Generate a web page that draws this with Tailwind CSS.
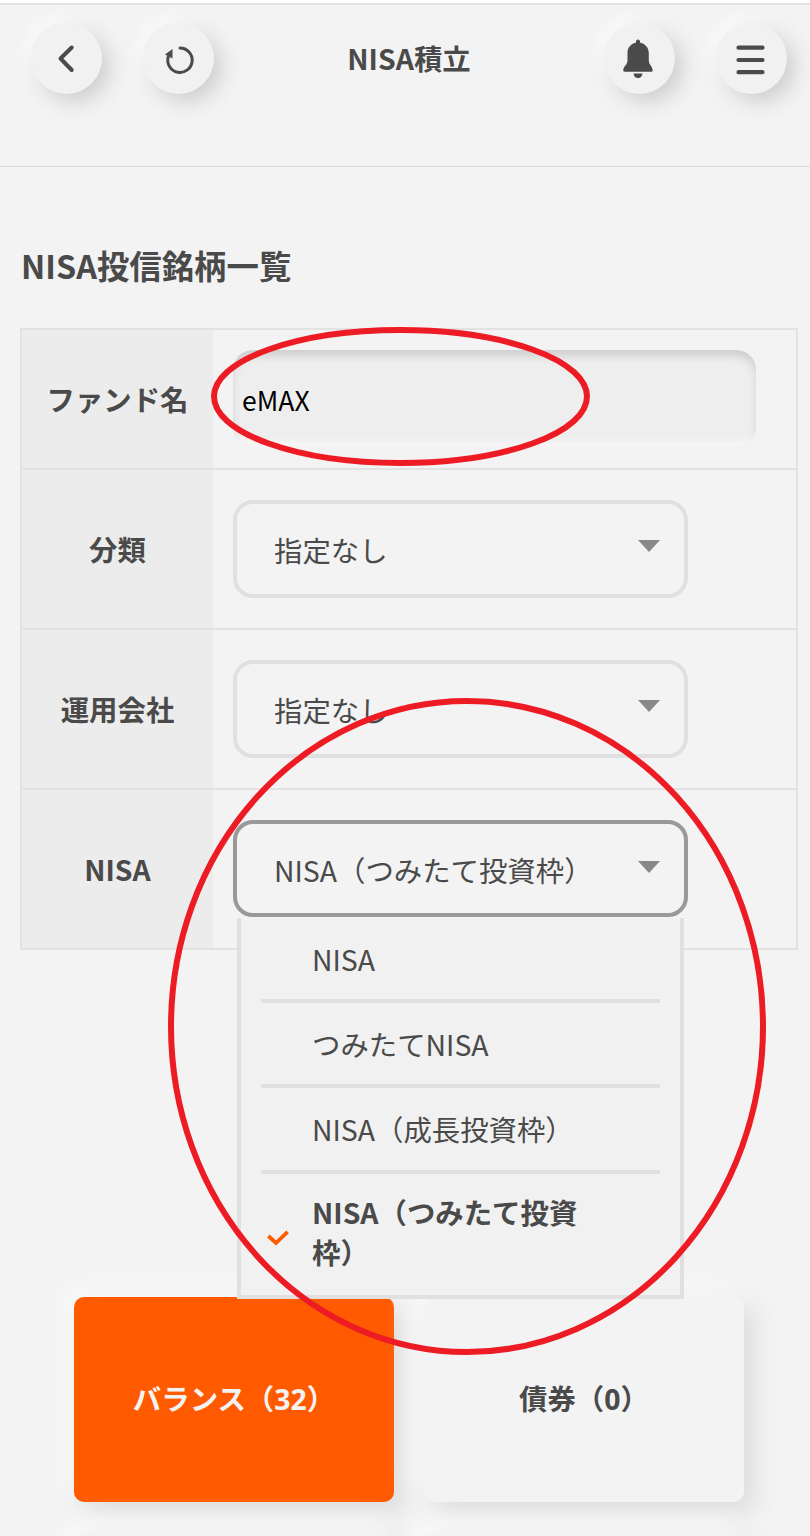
<!DOCTYPE html>
<html lang="ja">
<head>
    <meta charset="UTF-8">
    <meta name="viewport" content="width=device-width, initial-scale=1.0">
    <title>NISA積立</title>
    <script src="https://cdn.jsdelivr.net/npm/@tailwindcss/browser@4"></script>
</head>
<body class="bg-[#f3f3f3]">
    <div class="relative w-[810px] h-[1536px] overflow-hidden bg-[#f3f3f3] text-[#4a4a4a] text-[28.4px] leading-[40px] font-['Noto_Sans_CJK_JP',sans-serif]">

        <!-- Header -->
        <header class="h-[167px] border-t-3 border-t-white border-b border-b-[#dcdcdc]">
            <div class="flex justify-between border-t-2 border-[#e0e0e0] pt-[18px] pl-[31px] pr-[23px]">
                <div class="flex gap-[41px]">
                    <button class="flex items-center justify-center size-[71px] rounded-full bg-[#f1f1f1] shadow-[8px_8px_20px_#cfcfcf,-5px_-5px_14px_#fcfcfc]">
                        <svg class="size-[71px]" viewBox="0 0 71 71" fill="none" stroke="#4a4a4a" stroke-width="4" stroke-linecap="round" stroke-linejoin="round"><path d="M40.7 24.500 29.5 35.500 40.7 47"/></svg>
                    </button>
                    <button class="flex items-center justify-center size-[71px] rounded-full bg-[#f1f1f1] shadow-[8px_8px_20px_#cfcfcf,-5px_-5px_14px_#fcfcfc]">
                        <svg class="size-[71px]" viewBox="0 0 71 71" fill="none"><path d="M37 25A12.2 12.2 0 1 1 25.2 34" stroke="#4a4a4a" stroke-width="3" stroke-linecap="round"/><path d="M22 31.5 29.5 26V35.5Z" fill="#4a4a4a"/></svg>
                    </button>
                </div>
                <h1 class="pt-[15px] font-bold">NISA積立</h1>
                <div class="flex gap-[41px]">
                    <button class="flex items-center justify-center size-[71px] rounded-full bg-[#f1f1f1] shadow-[8px_8px_20px_#cfcfcf,-5px_-5px_14px_#fcfcfc]">
                        <svg class="size-[71px]" viewBox="0 0 71 71" fill="#4a4a4a"><path d="M34 16.5q2 0 2.2 3.2C41.600 20.700 44.800 25 44.800 30V37.500C44.800 42 48.700 43 48.700 47.500Q48.700 48.800 47 48.800H21Q19.300 48.800 19.300 47.500C19.300 43 23.500 42 23.500 37.500V30C23.500 25 26.400 20.700 31.800 19.700Q32 16.500 34 16.500ZM29.500 50.500H38.500C38 53.500 36.500 55 34 55S30 53.500 29.500 50.500Z"/></svg>
                    </button>
                    <button class="flex items-center justify-center size-[71px] rounded-full bg-[#f1f1f1] shadow-[8px_8px_20px_#cfcfcf,-5px_-5px_14px_#fcfcfc]">
                        <svg class="size-[71px]" viewBox="0 0 71 71" stroke="#4a4a4a" stroke-width="4.2" stroke-linecap="round"><path d="M22.500 24.700H46.500M22.500 37H46.500M22.500 49.200H46.500"/></svg>
                    </button>
                </div>
            </div>
        </header>

        <main>
            <h2 class="pt-[78px] pl-[21px] text-[32.4px] font-bold">NISA投信銘柄一覧</h2>

            <!-- Search conditions -->
            <section class="mt-[43px] ml-[20px] w-[778px] border-2 border-[#e2e2e2] divide-y-2 divide-[#e2e2e2]">
                <div class="flex h-[140px]">
                    <div class="flex items-center justify-center w-[191px] bg-[#ececec] font-bold">ファンド名</div>
                    <div class="pl-[20px] pt-[20px]">
                        <input type="text" value="eMAX" class="block w-[523px] h-[97px] pl-[9px] pt-[2px] rounded-[20px] bg-[#eeeeee] text-black text-[26.5px] shadow-[inset_0_6px_8px_#cecece,inset_0_-5px_6px_#f8f8f8]">
                    </div>
                </div>
                <div class="flex h-[160px]">
                    <div class="flex items-center justify-center w-[191px] bg-[#ececec] font-bold">分類</div>
                    <div class="pl-[20px] pt-[30px]">
                        <div class="flex items-center justify-between w-[455px] h-[98px] border-4 border-[#e0e0e0] rounded-[20px] pl-[37px] pr-[24px]">
                            <span class="pt-[1px]">指定なし</span>
                            <svg class="w-[22px] h-[12px] mb-[6px]" viewBox="0 0 22 12"><path d="M0 0H22L11 12Z" fill="#888888"/></svg>
                        </div>
                    </div>
                </div>
                <div class="flex h-[160px]">
                    <div class="flex items-center justify-center w-[191px] bg-[#ececec] font-bold">運用会社</div>
                    <div class="pl-[20px] pt-[30px]">
                        <div class="flex items-center justify-between w-[455px] h-[98px] border-4 border-[#e0e0e0] rounded-[20px] pl-[37px] pr-[24px]">
                            <span class="pt-[1px]">指定なし</span>
                            <svg class="w-[22px] h-[12px] mb-[6px]" viewBox="0 0 22 12"><path d="M0 0H22L11 12Z" fill="#888888"/></svg>
                        </div>
                    </div>
                </div>
                <div class="flex h-[158px]">
                    <div class="flex items-center justify-center w-[191px] bg-[#ececec] font-bold">NISA</div>
                    <div class="relative pl-[20px] pt-[30px]">
                        <div class="flex items-center justify-between w-[455px] h-[97px] border-4 border-[#999999] rounded-[20px] pl-[37px] pr-[24px]">
                            <span class="pt-[3px] whitespace-nowrap">NISA（つみたて投資枠）</span>
                            <svg class="w-[22px] h-[12px] mb-[3px]" viewBox="0 0 22 12"><path d="M0 0H22L11 12Z" fill="#888888"/></svg>
                        </div>
                        <!-- Open option list -->
                        <ul class="absolute z-10 left-[24px] top-[128px] w-[447px] h-[381px] px-[20px] border-4 border-t-0 border-[#e0e0e0] bg-[#f1f1f1]">
                            <li class="h-[85px] pt-[21px] pl-[51px] border-b-4 border-[#e0e0e0]">NISA</li>
                            <li class="h-[85px] pt-[21px] pl-[51px] border-b-4 border-[#e0e0e0]">つみたてNISA</li>
                            <li class="h-[86px] pt-[21px] pl-[51px] border-b-4 border-[#e0e0e0]">NISA（成長投資枠）</li>
                            <li class="flex pt-[18px] font-bold">
                                <svg class="shrink-0 w-[22px] h-[16px] ml-[6px] mr-[23px] mt-[38px]" viewBox="0 0 22 16" fill="none" stroke="#ff5a00" stroke-width="3.800"><path d="M1.400 6 9 13 20.600 1.800"/></svg>
                                <span class="w-[280px]">NISA（つみたて投資枠）</span>
                            </li>
                        </ul>
                    </div>
                </div>
            </section>

            <!-- Fund categories -->
            <section class="grid grid-cols-[320px_320px] gap-x-[30px] gap-y-[31px] mt-[347px] ml-[74px] font-bold">
                <button class="h-[205px] pb-[3px] rounded-[10px] bg-[#ff5a00] text-[#f3f3f3] shadow-[10px_10px_24px_#dcdcdc,-10px_-10px_24px_#fafafa]">バランス（<span class="font-['Noto_Sans']">32</span>）</button>
                <button class="h-[205px] pb-[3px] rounded-[10px] bg-[#f3f3f3] shadow-[10px_10px_24px_#dcdcdc,-10px_-10px_24px_#fafafa]">債券（<span class="font-['Noto_Sans']">0</span>）</button>
                <div class="h-[205px] rounded-[10px] bg-[#f3f3f3] shadow-[10px_10px_24px_#dcdcdc,-10px_-10px_24px_#fafafa]"></div>
                <div class="h-[205px] rounded-[10px] bg-[#f3f3f3] shadow-[10px_10px_24px_#dcdcdc,-10px_-10px_24px_#fafafa]"></div>
            </section>
        </main>

        <!-- Red marks over the fund name and the NISA options -->
        <svg class="absolute inset-0 z-20 pointer-events-none" width="810" height="1536" viewBox="0 0 810 1536" fill="none" stroke="#ed1c24" stroke-width="6">
            <ellipse cx="400.500" cy="396.500" rx="186.500" ry="66.500"/>
            <ellipse cx="467" cy="1026.500" rx="296" ry="325.500"/>
        </svg>
    </div>
</body>
</html>
